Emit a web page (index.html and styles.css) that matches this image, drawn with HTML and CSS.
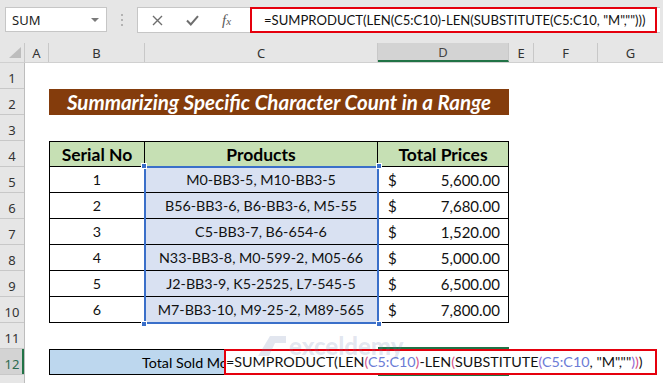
FILE: index.html
```html
<!DOCTYPE html>
<html lang="en">
<head>
    <meta charset="UTF-8">
    <meta name="viewport" content="width=device-width, initial-scale=1.0">
    <title>Summarizing Specific Character Count in a Range</title>
    <link rel="stylesheet" href="styles.css">
</head>
<body>

    <!-- name box + formula bar -->
    <div class="toolbar">
        <div class="name-box">
            <span>SUM</span>
            <span class="drop"></span>
        </div>
        <div class="grip"><i></i><i></i><i></i></div>
        <div class="formula-bar">
            <div class="bar-icons">
                <svg width="11" height="11" viewBox="0 0 11 11"><path d="M1 1 L10 10 M10 1 L1 10" stroke="#6e6e6e" stroke-width="1.4" fill="none"/></svg>
                <svg width="13" height="11" viewBox="0 0 13 11"><path d="M1 5.5 L4.8 9.5 L12 1.2" stroke="#6e6e6e" stroke-width="2" fill="none"/></svg>
                <span class="fx">f<span>x</span></span>
            </div>
            <div class="formula-input">=SUMPRODUCT(LEN(C5:C10)-LEN(SUBSTITUTE(C5:C10, "M","")))</div>
        </div>
    </div>

    <div class="sheet">
        <div class="corner"><span></span></div>

        <div class="col-heads">
            <div class="ch w-a">A</div>
            <div class="ch w-b">B</div>
            <div class="ch w-c">C</div>
            <div class="ch w-d active">D</div>
            <div class="ch w-e">E</div>
            <div class="ch w-f">F</div>
            <div class="ch w-g">G</div>
        </div>

        <div class="row-heads">
            <div class="rh">1</div>
            <div class="rh">2</div>
            <div class="rh">3</div>
            <div class="rh">4</div>
            <div class="rh">5</div>
            <div class="rh">6</div>
            <div class="rh">7</div>
            <div class="rh">8</div>
            <div class="rh">9</div>
            <div class="rh">10</div>
            <div class="rh">11</div>
            <div class="rh active">12</div>
            <div class="rh">13</div>
        </div>

        <div class="cells">
            <div class="title">Summarizing Specific Character Count in a Range</div>

            <div class="data">
                <div class="th">Serial No</div>
                <div class="th">Products</div>
                <div class="th">Total Prices</div>

                <div class="td">1</div>
                <div class="td prod">M0-BB3-5, M10-BB3-5</div>
                <div class="td price"><span>$</span><span>5,600.00</span></div>

                <div class="td">2</div>
                <div class="td prod">B56-BB3-6, B6-BB3-6, M5-55</div>
                <div class="td price"><span>$</span><span>7,680.00</span></div>

                <div class="td">3</div>
                <div class="td prod">C5-BB3-7, B6-654-6</div>
                <div class="td price"><span>$</span><span>1,520.00</span></div>

                <div class="td">4</div>
                <div class="td prod">N33-BB3-8, M0-599-2, M05-66</div>
                <div class="td price"><span>$</span><span>5,000.00</span></div>

                <div class="td">5</div>
                <div class="td prod">J2-BB3-9, K5-2525, L7-545-5</div>
                <div class="td price"><span>$</span><span>6,500.00</span></div>

                <div class="td">6</div>
                <div class="td prod">M7-BB3-10, M9-25-2, M89-565</div>
                <div class="td price"><span>$</span><span>7,800.00</span></div>
            </div>

            <div class="ref-range">
                <span class="handle tl"></span>
                <span class="handle tr"></span>
                <span class="handle bl"></span>
                <span class="handle br"></span>
            </div>

            <div class="total">Total Sold Models</div>
            <div class="total-value"></div>

            <div class="cell-editor">=SUMPRODUCT(LEN<span class="p2">(</span><span class="ref">C5:C10</span><span class="p2">)</span>-LEN<span class="p2">(</span>SUBSTITUTE<span class="p3">(</span><span class="ref">C5:C10</span>, "M",""<span class="p3">)</span><span class="p2">)</span>)</div>

            <div class="watermark">
                <svg width="30" height="24" viewBox="0 0 30 24"><path d="M1 22 L13 2 L29 2 L29 9 L18 9 L12 22 Z" fill="currentColor"/></svg>
                <span>exceldemy</span>
            </div>
        </div>
    </div>

</body>
</html>
```

FILE: styles.css
```css
body {
    margin: 0;
    width: 663px;
    height: 383px;
    overflow: hidden;
    background-color: #fff;
    font-family: "Lato", sans-serif;
}

/* ---------- top bar ---------- */
.toolbar {
    display: flex;
    align-items: flex-start;
    height: 43px;
    padding: 7px 0 0 5px;
    box-sizing: border-box;
    background-color: #e6e6e6;
}
.name-box {
    display: flex;
    flex-shrink: 0;
    align-items: center;
    justify-content: space-between;
    width: 102px;
    height: 25px;
    padding: 0 7px 0 6px;
    box-sizing: border-box;
    background-color: #fff;
    border: 1px solid #c6c6c6;
    font-family: "Noto Sans", sans-serif;
    font-size: 13px;
    color: #222;
}
.drop {
    border-left: 4px solid transparent;
    border-right: 4px solid transparent;
    border-top: 4px solid #7a7a7a;
}
.grip {
    display: flex;
    flex-shrink: 0;
    flex-direction: column;
    gap: 3px;
    width: 30px;
    align-items: center;
    padding-top: 7px;
}
.grip i {
    width: 2px;
    height: 2px;
    background-color: #b3b3b3;
}
.formula-bar {
    display: flex;
    flex: 1;
    min-width: 0;
    height: 26px;
    margin-right: 3px;
    background-color: #fff;
    border: 1px solid #c6c6c6;
    border-right: none;
    box-sizing: border-box;
}
.bar-icons {
    display: flex;
    flex-shrink: 0;
    align-items: center;
    gap: 23px;
    width: 112px;
    padding-left: 14px;
    box-sizing: border-box;
}
.fx {
    font-family: "Liberation Serif", serif;
    font-style: italic;
    font-size: 15px;
    color: #5a5a5a;
}
.fx span {
    font-size: 11px;
}
.formula-input {
    flex: 1;
    min-width: 0;
    margin: -1px 3px -1px 0;
    padding-left: 12px;
    border: 2px solid #e5000d;
    font-size: 13.1px;
    line-height: 22px;
    color: #111;
    white-space: nowrap;
    overflow: hidden;
}

/* ---------- sheet ---------- */
.sheet {
    display: grid;
    grid-template-columns: 25px 1fr;
    grid-template-rows: 20px 1fr;
}
.corner {
    display: flex;
    align-items: flex-end;
    justify-content: flex-end;
    padding: 0 3px 4px 0;
    background-color: #e6e6e6;
    border-right: 1px solid #c8c8c8;
    border-bottom: 1px solid #d0d0d0;
}
.corner span {
    width: 0;
    height: 0;
    border-left: 12px solid transparent;
    border-bottom: 11px solid #bdbdbd;
}
.col-heads {
    display: flex;
    background-color: #e6e6e6;
    border-bottom: 1px solid #d0d0d0;
}
.ch {
    display: flex;
    align-items: center;
    justify-content: center;
    box-sizing: border-box;
    border-right: 1px solid #c8c8c8;
    font-family: "Noto Sans", sans-serif;
    font-size: 13px;
    color: #333;
}
.ch.active {
    background-color: #d3d3d3;
    border-bottom: 2px solid #217346;
    color: #444;
}
.w-a { width: 24px; }
.w-b { width: 96px; }
.w-c { width: 233px; }
.w-d { width: 131px; }
.w-e { width: 25px; }
.w-f { width: 64px; }
.w-g { flex: 1; border-right: none; }

.row-heads {
    display: flex;
    flex-direction: column;
    background-color: #e6e6e6;
    border-right: 1px solid #bdbdbd;
}
.rh {
    display: flex;
    align-items: flex-end;
    justify-content: center;
    height: 26px;
    padding-bottom: 1px;
    box-sizing: border-box;
    border-bottom: 1px solid #c8c8c8;
    font-family: "Noto Sans", sans-serif;
    font-size: 13px;
    color: #333;
}
.rh.active {
    background-color: #d3d3d3;
    box-shadow: inset -2px 0 0 #217346;
    color: #2d6b4f;
}

.cells {
    position: relative;
    display: grid;
    grid-template-columns: 24px 96px 233px 131px 25px 64px 1fr;
    grid-template-rows: repeat(13, 26px);
}
.title {
    grid-column: 2 / 5;
    grid-row: 2;
    display: flex;
    align-items: center;
    justify-content: center;
    background-color: #843c0c;
    color: #fff;
    font-weight: bold;
    font-style: italic;
    font-size: 20.5px;
}

.data {
    grid-column: 2 / 5;
    grid-row: 4 / 11;
    display: grid;
    grid-template-columns: 95px 233px 131px;
    grid-template-rows: 25px repeat(6, 26px);
    border-left: 1px solid #000;
    border-top: 1px solid #000;
}
.th, .td {
    display: flex;
    align-items: center;
    justify-content: center;
    border-right: 1px solid #000;
    border-bottom: 1px solid #000;
    white-space: nowrap;
    overflow: hidden;
}
.th {
    background-color: #c6e0b4;
    font-weight: bold;
    font-size: 17.5px;
}
.td {
    font-size: 14.3px;
    color: #111;
}
.td.prod {
    background-color: #d9e1f2;
}
.td.price {
    justify-content: space-between;
    padding: 0 8px 0 10px;
    font-size: 15px;
}

.ref-range {
    grid-column: 3;
    grid-row: 5 / 11;
    position: relative;
    margin: -1px;
    border: 2px solid #3a6fc9;
}
.handle {
    position: absolute;
    width: 4px;
    height: 4px;
    background-color: #3a6fc9;
    border: 1px solid #fff;
}
.handle.tl { top: -5px; left: -5px; }
.handle.tr { top: -5px; right: -5px; }
.handle.bl { bottom: -5px; left: -5px; }
.handle.br { bottom: -5px; right: -5px; }

.total {
    grid-column: 2 / 4;
    grid-row: 12;
    display: flex;
    align-items: center;
    padding-left: 92px;
    background-color: #bdd7ee;
    border: 1px solid #000;
    border-right: none;
    font-size: 14.3px;
    white-space: nowrap;
    overflow: hidden;
}
.total-value {
    grid-column: 4;
    grid-row: 12;
    margin: -2px 0 -1px 0;
    background-color: #bdd7ee;
    border: 2px solid #217346;
}
.cell-editor {
    grid-column: 3 / 8;
    grid-row: 12;
    justify-self: start;
    width: 433px;
    margin-left: 79px;
    padding-left: 0;
    box-sizing: border-box;
    background-color: #fff;
    border: 2px solid #e5000d;
    font-size: 14.3px;
    line-height: 22px;
    color: #111;
    white-space: nowrap;
    overflow: hidden;
}
.ref { color: #6b7bd6; }
.p2 { color: #d4508a; }
.p3 { color: #9366d3; }

.watermark {
    position: absolute;
    left: 232px;
    top: 268px;
    display: flex;
    align-items: center;
    gap: 2px;
    color: rgba(110, 130, 175, 0.2);
    font-weight: 900;
    font-size: 24px;
    pointer-events: none;
}
```
